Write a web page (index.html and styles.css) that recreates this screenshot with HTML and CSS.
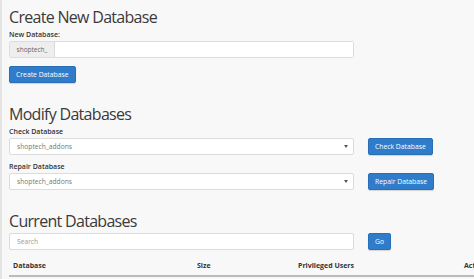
FILE: index.html
```html
<!DOCTYPE html>
<html lang="en">
<head>
    <meta charset="UTF-8">
    <title>MySQL Databases</title>
    <link rel="stylesheet" href="styles.css">
</head>
<body>
<div class="page">

    <section class="section">
        <h2>Create New Database</h2>
        <label class="field-label" for="new-db">New Database:</label>
        <div class="row row-input">
            <div class="input-group">
                <span class="prefix">shoptech_</span>
                <input type="text" id="new-db">
            </div>
        </div>
        <div class="row">
            <button class="btn">Create Database</button>
        </div>
    </section>

    <section class="section">
        <h2>Modify Databases</h2>
        <label class="field-label">Check Database</label>
        <div class="row row-select">
            <div class="select"><span>shoptech_addons</span><span class="caret"></span></div>
            <button class="btn">Check Database</button>
        </div>
        <label class="field-label">Repair Database</label>
        <div class="row">
            <div class="select"><span>shoptech_addons</span><span class="caret"></span></div>
            <button class="btn">Repair Database</button>
        </div>
    </section>

    <section class="section">
        <h2 class="tight">Current Databases</h2>
        <div class="row">
            <input type="text" class="search" placeholder="Search">
            <button class="btn">Go</button>
        </div>
        <table class="db-table">
            <thead>
                <tr>
                    <th class="col-db">Database</th>
                    <th class="col-size">Size</th>
                    <th class="col-users">Privileged Users</th>
                    <th class="col-actions">Actions</th>
                </tr>
            </thead>
        </table>
    </section>

</div>
</body>
</html>
```

FILE: styles.css
```css
html, body {
    margin: 0;
    height: 100%;
    overflow: hidden;
}

body {
    font-family: "Open Sans", Arial, sans-serif;
    background-color: #f8f8f8;
    color: #333;
}

.page {
    border-left: 2px solid #e4e4e4;
    padding: 7px 0 0 7px;
    min-height: 100%;
    box-sizing: border-box;
}

h2 {
    font-size: 16px;
    font-weight: 400;
    letter-spacing: -0.7px;
    margin: 0 0 3px;
    line-height: 20px;
    color: #3a3a3a;
}

h2.tight {
    margin-bottom: 2px;
}

.section {
    margin-bottom: 21px;
}

.field-label {
    display: block;
    font-size: 7px;
    font-weight: 600;
    line-height: 10px;
    margin-bottom: 1px;
}

.row {
    display: flex;
    align-items: center;
    gap: 14px;
}

.row-input {
    margin-top: 1px;
    margin-bottom: 8px;
}

.row-select {
    margin-bottom: 7px;
}

.input-group {
    display: flex;
    width: 345px;
    height: 17px;
    box-sizing: border-box;
    border: 1px solid #dcdcdc;
    border-radius: 2px;
    background: white;
}

.prefix {
    width: 44px;
    background: #eeeeee;
    border-right: 1px solid #dcdcdc;
    font-size: 6.5px;
    color: #666;
    line-height: 15px;
    text-align: center;
}

.input-group input {
    border: none;
    flex: 1;
    padding: 0;
    background: white;
}

.select, .search {
    width: 345px;
    height: 17px;
    box-sizing: border-box;
    border: 1px solid #dcdcdc;
    border-radius: 2px;
    background: white;
    font-family: inherit;
    font-size: 6.7px;
    color: #777;
}

.select {
    display: flex;
    justify-content: space-between;
    align-items: center;
    padding: 0 5px 0 7px;
}

.caret {
    width: 0;
    height: 0;
    border-left: 2px solid transparent;
    border-right: 2px solid transparent;
    border-top: 3px solid #555;
}

.search {
    padding: 0 7px;
}

.search::placeholder {
    color: #999;
}

.btn {
    font-family: inherit;
    font-size: 6.8px;
    color: white;
    background-color: #2e7cca;
    border: 1px solid #2a6fb5;
    border-radius: 2px;
    height: 17px;
    padding: 0 6px;
    cursor: pointer;
    box-shadow: 0 1px 1px rgba(0, 0, 0, 0.15);
}

.db-table {
    width: 540px;
    table-layout: fixed;
    border-collapse: collapse;
    font-size: 7px;
    margin-top: 8px;
}

.db-table th {
    text-align: left;
    font-weight: 700;
    line-height: 10px;
    padding: 3px 4px 4px;
    border-bottom: 2px solid #bbb;
}

.col-db { width: 176px; }
.col-size { width: 93px; }
.col-users { width: 158px; }
```
